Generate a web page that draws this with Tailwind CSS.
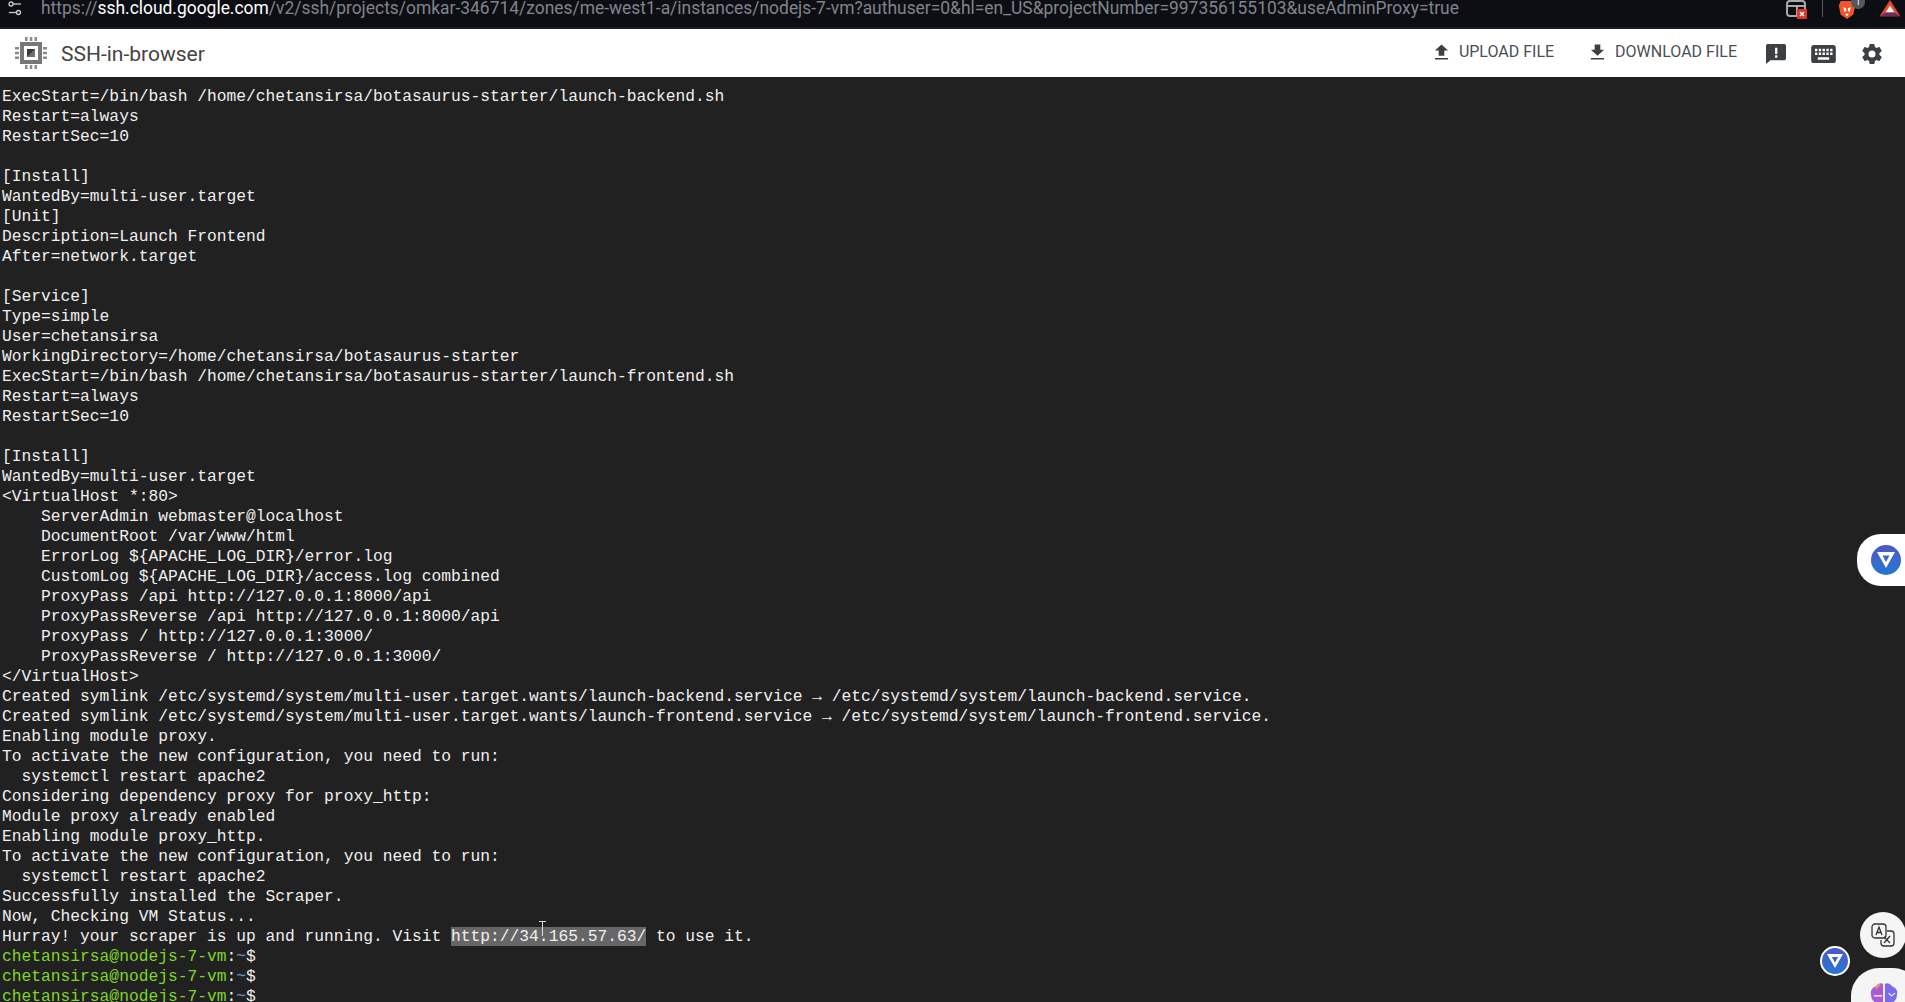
<!DOCTYPE html>
<html lang="en">
<head>
    <meta charset="UTF-8">
    <meta name="viewport" content="width=device-width, initial-scale=1.0">
    <title>SSH-in-browser</title>
    <script src="https://cdn.jsdelivr.net/npm/@tailwindcss/browser@4"></script>
</head>
<body class="bg-[#212121] h-[1002px] overflow-hidden relative font-['Roboto',sans-serif]">
    <!-- browser address bar -->
    <div class="h-[29px] bg-[#0d0e13] flex items-start justify-between overflow-hidden border-b-[2px] border-[#1b1c21]">
        <div class="flex items-start">
            <svg class="w-[18px] h-[18px] ml-[6px]" viewBox="0 0 18 18" fill="none" stroke="#c9ccd2" stroke-width="1.3">
                <circle cx="5" cy="4" r="2"/><path d="M7 4h8"/><circle cx="12.5" cy="12.5" r="2"/><path d="M3 12.5h7.5"/>
            </svg>
            <div class="ml-[17px] text-[17.43px] leading-[16px] text-[#80848c] whitespace-nowrap">https://<span class="text-white">ssh.cloud.google.com</span>/v2/ssh/projects/omkar-346714/zones/me-west1-a/instances/nodejs-7-vm?authuser=0&amp;hl=en_US&amp;projectNumber=997356155103&amp;useAdminProxy=true</div>
        </div>
        <div class="flex items-start mr-[4px]">
            <svg class="w-[22px] h-[20px]" viewBox="0 0 22 20">
                <rect x="1" y="1" width="18" height="15" rx="3" fill="none" stroke="#a7a9ad" stroke-width="2"/>
                <path d="M1 6h18M11 6v10" stroke="#a7a9ad" stroke-width="2"/>
                <rect x="11" y="9" width="10" height="10" fill="#d9382b"/>
                <path d="M14 12l4 4M18 12l-4 4" stroke="#fff" stroke-width="1.4"/>
            </svg>
            <div class="w-px h-[17px] bg-[#55575c] ml-[14px]"></div>
            <div class="relative ml-[14px]">
                <svg class="w-[20px] h-[20px]" viewBox="0 0 20 22">
                    <path d="M3 1h14l2 5-2 10-7 5-7-5-2-10z" fill="#f1562b"/>
                    <path d="M6 8l3 1v3l-2 1zM14 8l-3 1v3l2 1zM8 15h4l-2 3z" fill="#fff"/>
                </svg>
                <span class="absolute -top-[5px] left-[14px] w-[14px] h-[14px] rounded-full bg-[#55575c] text-white text-[9px] leading-[14px] text-center">1</span>
            </div>
            <svg class="w-[22px] h-[18px] ml-[22px]" viewBox="0 0 23 20">
                <path d="M11.500 0L23 18H0z" fill="#e8472b"/>
                <path d="M11.500 6l5 8H6.500z" fill="#f4f2f4"/>
                <path d="M0 18l6.500-4h10L23 18z" fill="#6b2f5f"/>
            </svg>
        </div>
    </div>

    <!-- ssh toolbar -->
    <header class="h-[48px] bg-white flex items-center justify-between">
        <div class="flex items-center">
            <svg class="w-[36px] h-[36px] ml-[13px]" viewBox="0 0 36 36">
                <path d="M7 7h22v22H7z" fill="#777"/>
                <path d="M11 11h14v14H11z" fill="#fff"/>
                <path d="M14 14h8v8h-8z" fill="#6f6f6f"/>
                <path d="M14 14h8l-8 8z" fill="#3a3a3a"/>
                <path d="M12 2h2.500v4H12zM16.800 2h2.500v4h-2.500zM21.500 2H24v4h-2.500zM12 30h2.500v4H12zM16.800 30h2.500v4h-2.500zM21.500 30H24v4h-2.500zM2 12h4v2.500H2zM2 16.800h4v2.500H2zM2 21.500h4V24H2zM30 12h4v2.500h-4zM30 16.800h4v2.500h-4zM30 21.500h4V24h-4z" fill="#8a8a8a"/>
            </svg>
            <h1 class="ml-[12px] mt-[2px] text-[21px] leading-[24px] text-[#444] font-normal">SSH-in-browser</h1>
        </div>
        <div class="flex items-center text-[#4a4f57]">
            <button class="flex items-center text-[16px] mb-[3px]">
                <svg class="w-[15px] h-[18px] mr-[10px]" viewBox="0 0 16 18" fill="#3c4043"><path d="M5 13V7.500H1L8 1l7 6.500h-4V13zM1 15.500h14V17H1z"/></svg>
                UPLOAD FILE
            </button>
            <button class="flex items-center text-[16px] ml-[36px] mb-[3px]">
                <svg class="w-[15px] h-[18px] mr-[10px]" viewBox="0 0 16 18" fill="#3c4043"><path d="M5 1v5.500H1L8 13l7-6.500h-4V1zM1 15.500h14V17H1z"/></svg>
                DOWNLOAD FILE
            </button>
            <svg class="w-[20px] h-[20px] ml-[29px] mt-[1px]" viewBox="0 0 22 22" fill="#3c4043"><path d="M2 0h18a2 2 0 0 1 2 2v14a2 2 0 0 1-2 2H5l-5 4V2a2 2 0 0 1 2-2z"/><path d="M10 4h2.500v7H10zM10 12.500h2.500V15H10z" fill="#fff"/></svg>
            <svg class="w-[25px] h-[18px] ml-[25px] mt-[1px]" viewBox="0 0 26 19" fill="#3c4043"><rect width="26" height="19" rx="3"/><path d="M4 4h2.500v2.500H4zM8 4h2.500v2.500H8zM12 4h2.500v2.500H12zM16 4h2.500v2.500H16zM20 4h2.500v2.500H20zM4 8h2.500v2.500H4zM8 8h2.500v2.500H8zM12 8h2.500v2.500H12zM16 8h2.500v2.500H16zM20 8h2.500v2.500H20zM7 13h12v2.500H7z" fill="#fff"/></svg>
            <svg class="w-[24px] h-[24px] ml-[24px] mr-[21px] mt-[1px]" viewBox="0 0 24 24" fill="#3c4043"><path d="M19.430 12.980c.04-.32.07-.64.07-.98s-.03-.66-.07-.98l2.110-1.650c.19-.15.24-.42.12-.64l-2-3.460c-.12-.22-.39-.3-.61-.22l-2.490 1c-.52-.4-1.080-.73-1.690-.98l-.38-2.650A.488.488 0 0 0 14 2h-4c-.25 0-.46.18-.49.42l-.38 2.650c-.61.25-1.170.59-1.690.98l-2.490-1c-.23-.09-.49 0-.61.22l-2 3.460c-.13.22-.07.49.12.64l2.110 1.650c-.04.32-.07.65-.07.98s.03.66.07.98l-2.110 1.650c-.19.15-.24.42-.12.64l2 3.460c.12.22.39.3.61.22l2.490-1c.52.4 1.080.73 1.690.98l.38 2.650c.03.24.24.42.49.42h4c.25 0 .46-.18.49-.42l.38-2.650c.61-.25 1.170-.59 1.690-.98l2.490 1c.23.09.49 0 .61-.22l2-3.460c.12-.22.07-.49-.12-.64l-2.110-1.650zM12 15.500a3.500 3.500 0 1 1 0-7 3.500 3.500 0 0 1 0 7z"/></svg>
        </div>
    </header>

    <!-- terminal output -->
    <pre class="pt-[10px] pl-[2px] font-['Liberation_Mono',monospace] text-[16.28px] leading-[20px] text-[#f0f0f0]">ExecStart=/bin/bash /home/chetansirsa/botasaurus-starter/launch-backend.sh
Restart=always
RestartSec=10

[Install]
WantedBy=multi-user.target
[Unit]
Description=Launch Frontend
After=network.target

[Service]
Type=simple
User=chetansirsa
WorkingDirectory=/home/chetansirsa/botasaurus-starter
ExecStart=/bin/bash /home/chetansirsa/botasaurus-starter/launch-frontend.sh
Restart=always
RestartSec=10

[Install]
WantedBy=multi-user.target
&lt;VirtualHost *:80&gt;
    ServerAdmin webmaster@localhost
    DocumentRoot /var/www/html
    ErrorLog ${APACHE_LOG_DIR}/error.log
    CustomLog ${APACHE_LOG_DIR}/access.log combined
    ProxyPass /api http://127.0.0.1:8000/api
    ProxyPassReverse /api http://127.0.0.1:8000/api
    ProxyPass / http://127.0.0.1:3000/
    ProxyPassReverse / http://127.0.0.1:3000/
&lt;/VirtualHost&gt;
Created symlink /etc/systemd/system/multi-user.target.wants/launch-backend.service → /etc/systemd/system/launch-backend.service.
Created symlink /etc/systemd/system/multi-user.target.wants/launch-frontend.service → /etc/systemd/system/launch-frontend.service.
Enabling module proxy.
To activate the new configuration, you need to run:
  systemctl restart apache2
Considering dependency proxy for proxy_http:
Module proxy already enabled
Enabling module proxy_http.
To activate the new configuration, you need to run:
  systemctl restart apache2
Successfully installed the Scraper.
Now, Checking VM Status...
Hurray! your scraper is up and running. Visit <span class="bg-[#666]">http://34.165.57.63/</span> to use it.
<span class="text-[#80d626]">chetansirsa@nodejs-7-vm</span>:<span class="text-[#6f9bd8]">~</span>$
<span class="text-[#80d626]">chetansirsa@nodejs-7-vm</span>:<span class="text-[#6f9bd8]">~</span>$
<span class="text-[#80d626]">chetansirsa@nodejs-7-vm</span>:<span class="text-[#6f9bd8]">~</span>$</pre>

    <!-- mouse cursor over the selected url -->
    <svg class="absolute left-[539px] top-[921px] w-[7px] h-[15px]" viewBox="0 0 7 15" fill="none" stroke="#ddd"><path d="M0 .5h7M3.500 0v15"/></svg>

    <!-- floating extension buttons -->
    <div class="absolute right-0 top-[534px] w-[48px] h-[52px] bg-white rounded-l-[24px] flex items-center pl-[14px]">
        <div class="w-[30px] h-[30px] rounded-full bg-gradient-to-b from-[#4b57c8] to-[#1f77d2] flex items-center justify-center">
            <svg class="w-[20px] h-[18px]" viewBox="0 0 20 18" fill="#fff" fill-rule="evenodd"><path d="M1 1h18l-9 16zM6.500 4.500l3.500 6.500 3.500-6.500z"/></svg>
        </div>
    </div>
    <div class="absolute left-[1820px] top-[946px] w-[30px] h-[30px] rounded-full border-[2px] border-white bg-gradient-to-b from-[#4b57c8] to-[#1f77d2] flex items-center justify-center">
        <svg class="w-[18px] h-[16px]" viewBox="0 0 20 18" fill="#fff" fill-rule="evenodd"><path d="M1 1h18l-9 16zM6.500 4.500l3.500 6.500 3.500-6.500z"/></svg>
    </div>
    <div class="absolute left-[1860px] top-[912px] w-[46px] h-[46px] rounded-full bg-[#f5f5f5] flex items-center justify-center">
        <svg class="w-[24px] h-[24px]" viewBox="0 0 24 24" fill="none" stroke="#333" stroke-width="1.300">
            <rect x="1" y="1" width="14" height="14" rx="3"/><path d="M5 12l3-8 3 8M6 9.500h4"/>
            <path d="M16 8h4a3 3 0 0 1 3 3v9a3 3 0 0 1-3 3h-7a3 3 0 0 1-3-3v-3"/><path d="M13 14l6 6M19 13l-6 7"/>
        </svg>
    </div>
    <div class="absolute left-[1851px] top-[968px] w-[70px] h-[70px] rounded-[28px] bg-[#f5f5f5] pt-[14px] pl-[19px]">
        <svg class="w-[28px] h-[24px]" viewBox="0 0 30 26">
            <path d="M14 2a6 6 0 0 0-8 3 7 7 0 0 0-5 9c0 6 5 10 13 10z" fill="#a85ad8"/>
            <path d="M16 2a6 6 0 0 1 8 3 7 7 0 0 1 5 9c0 6-5 10-13 10z" fill="#7a6be8"/>
            <path d="M6 5a6 6 0 0 1 6-3l-6 7z" fill="#f09a4a"/>
            <path d="M4 15h9M20 12l3 3 4-3" stroke="#fff" stroke-width="1.200" fill="none"/>
        </svg>
    </div>
</body>
</html>
